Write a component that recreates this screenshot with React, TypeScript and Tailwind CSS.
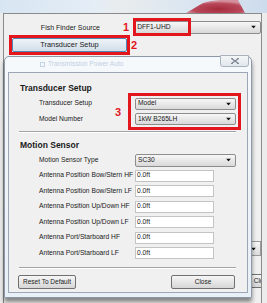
import React from "react";

function Arrow() {
  return (
    <svg
      width="5"
      height="3"
      viewBox="0 0 5 3"
      className="absolute right-[4px] top-1/2 -translate-y-1/2"
    >
      <path d="M0 0H5L2.5 3Z" fill="#111" />
    </svg>
  );
}

function Combo({ text, className }: { text: string; className: string }) {
  return (
    <div
      className={
        "relative flex items-center rounded-[2px] border border-[#8d8d8d] bg-linear-to-b from-[#f7f7f7] to-[#d9d9d9] " +
        className
      }
    >
      <span className="whitespace-nowrap pl-[2px] text-[6.7px] leading-none">{text}</span>
      <Arrow />
    </div>
  );
}

function Field({ text }: { text: string }) {
  return (
    <div className="flex h-[12px] w-[79px] items-center border border-[#c4c4c4] bg-white">
      <span className="pl-[1px] text-[6.7px] leading-none">{text}</span>
    </div>
  );
}

function Row({ label, children }: { label: string; children: React.ReactNode }) {
  return (
    <div className="flex h-[15.5px] items-center pl-[30px]">
      <span className="w-[96px] shrink-0 whitespace-nowrap text-[6.7px] leading-none">{label}</span>
      {children}
    </div>
  );
}

function Sep({ className }: { className: string }) {
  return <div className={"ml-[10px] w-[217px] border-t border-b border-t-[#a3a3a3] border-b-white " + className} />;
}

function WinButton({ children, className }: { children: React.ReactNode; className: string }) {
  return (
    <div
      className={
        "flex h-[14px] items-center justify-center rounded-[2px] border border-[#707070] bg-linear-to-b from-[#f6f6f6] to-[#d6d6d6] text-[6.5px] leading-none whitespace-nowrap " +
        className
      }
    >
      {children}
    </div>
  );
}

export default function App() {
  return (
    <div className="relative h-[303px] w-[267px] overflow-hidden bg-[#ececec] font-['Liberation_Sans',Arial,sans-serif] text-[#1a1a1a]">
      {/* desktop strip */}
      <div className="h-[13px]">
        <svg width="267" height="13" viewBox="0 0 267 13" className="block">
          <defs>
            <linearGradient id="sky" x1="0" x2="1" y1="0" y2="0">
              <stop offset="0" stopColor="#d7e5f2" />
              <stop offset="0.35" stopColor="#e4edf6" />
              <stop offset="0.45" stopColor="#e9ecee" />
              <stop offset="0.7" stopColor="#dbe6f1" />
              <stop offset="1" stopColor="#cddcec" />
            </linearGradient>
            <radialGradient id="red" cx="0.55" cy="0.7" r="0.6">
              <stop offset="0" stopColor="#a52c3c" />
              <stop offset="0.7" stopColor="#b9485a" />
              <stop offset="1" stopColor="#d3909c" />
            </radialGradient>
          </defs>
          <rect width="267" height="13" fill="url(#sky)" />
          <path d="M186 13 L203 3 Q214 -1 238 0 L245 13 Z" fill="url(#red)" />
        </svg>
      </div>

      {/* outer window */}
      <div className="ml-[3px] flex h-[290px] w-[259px] flex-col overflow-hidden border-x border-t border-[#8a8a8a] bg-[#f0f0f0]">
        {/* row 1 */}
        <div className="mt-[4px] flex h-[18px] items-center">
          <div className="w-[96px] shrink-0 text-right text-[7px] leading-none whitespace-nowrap">Fish Finder Source</div>
          <div className="ml-[23px] text-[11px] font-bold leading-none text-[#e3151d]">1</div>
          <div className="relative ml-[4px] flex h-full flex-1 items-center">
            <Combo text="DFF1-UHD" className="ml-[1px] h-[13px] flex-1" />
            <div className="absolute left-0 top-0 h-full w-[58px] border-[3px] border-[#e3151d]" />
          </div>
        </div>
        {/* row 2 */}
        <div className="-mt-[1px] flex h-[20px] items-center pl-[5px]">
          <div className="h-[20px] w-[121px] border-[3px] border-[#e3151d]">
            <div className="flex h-full w-full items-center justify-center rounded-[2px] border border-[#4f86b5] bg-linear-to-b from-[#eef3f8] to-[#d3dee8] text-[7.4px] leading-none">
              Transducer Setup
            </div>
          </div>
          <div className="ml-[1px] text-[11px] font-bold leading-none text-[#e3151d]">2</div>
        </div>
        {/* content hidden behind dialog */}
        <div className="mt-[186px] flex justify-end">
          <div className="relative h-[15px] w-[60px] border border-[#9a9a9a] bg-linear-to-b from-[#f7f7f7] to-[#dcdcdc]">
            <Arrow />
          </div>
        </div>
        <div className="mt-[18px] flex justify-end">
          <WinButton className="-mr-[33px] w-[64px] shrink-0">Close</WinButton>
        </div>
      </div>

      {/* dialog window */}
      <div className="absolute left-[4px] top-[56px] flex h-[242px] w-[248px] flex-col rounded-t-[5px] border border-[#8d99a6] bg-linear-to-b from-[#f6f9fc] to-[#e8eff6] px-[3px] pb-[4px] shadow-[0_4px_4px_rgba(0,0,0,0.45)]">
        <div className="relative flex h-[15px] items-center pl-[32px]">
          <div className="h-[5px] w-[5px] border border-[#c3d3e3]" />
          <span className="ml-[3px] text-[6.7px] leading-none text-[#bfd0e2] whitespace-nowrap">Transmission Power Auto</span>
          <div className="absolute right-[-1px] top-[-2px] flex h-[12px] w-[29px] items-center justify-center rounded-b-[3px] border border-[#a9b3be] bg-linear-to-b from-[#f4f6f8] to-[#e2e7ec]">
            <svg width="8" height="6" viewBox="0 0 8 6">
              <path d="M0.5 0.5 L7.5 5.5 M7.5 0.5 L0.5 5.5" stroke="#7a8591" strokeWidth="1.2" />
              <path d="M0 0.5 H2 M6 0.5 H8 M0 5.5 H2 M6 5.5 H8" stroke="#7a8591" strokeWidth="0.8" />
            </svg>
          </div>
        </div>

        {/* client area */}
        <div className="relative flex flex-1 flex-col border border-[#9ba7b4] bg-[#f0f0f0]">
          <div className="pl-[11px] pt-[9.5px] text-[8.5px] font-bold leading-[11px]">Transducer Setup</div>
          <div className="mt-[2.25px]">
            <Row label="Transducer Setup">
              <Combo text="Model" className="h-[12px] w-[101px]" />
            </Row>
            <Row label="Model Number">
              <Combo text="1kW B265LH" className="h-[12px] w-[101px]" />
            </Row>
          </div>
          <Sep className="mt-[4px]" />
          <div className="mt-[7px] pl-[11px] text-[8.5px] font-bold leading-[11px]">Motion Sensor</div>
          <div className="mt-[1.75px]">
            <Row label="Motion Sensor Type">
              <Combo text="SC30" className="h-[13px] w-[101px]" />
            </Row>
            <Row label="Antenna Position Bow/Stern HF">
              <Field text="0.0ft" />
            </Row>
            <Row label="Antenna Position Bow/Stern LF">
              <Field text="0.0ft" />
            </Row>
            <Row label="Antenna Position Up/Down HF">
              <Field text="0.0ft" />
            </Row>
            <Row label="Antenna Position Up/Down LF">
              <Field text="0.0ft" />
            </Row>
            <Row label="Antenna Port/Starboard HF">
              <Field text="0.0ft" />
            </Row>
            <Row label="Antenna Port/Starboard LF">
              <Field text="0.0ft" />
            </Row>
          </div>
          <Sep className="mt-[6px]" />
          <div className="mt-[6px] flex pl-[9px]">
            <WinButton className="w-[58px]">Reset To Default</WinButton>
            <WinButton className="ml-[95px] w-[64px]">Close</WinButton>
          </div>

          {/* annotation 3 */}
          <div className="absolute left-[119px] top-[20px] h-[37px] w-[113px] border-[3px] border-[#e3151d]" />
          <div className="absolute left-[106px] top-[33.5px] text-[11px] font-bold leading-[11px] text-[#e3151d]">3</div>
        </div>
      </div>
    </div>
  );
}
